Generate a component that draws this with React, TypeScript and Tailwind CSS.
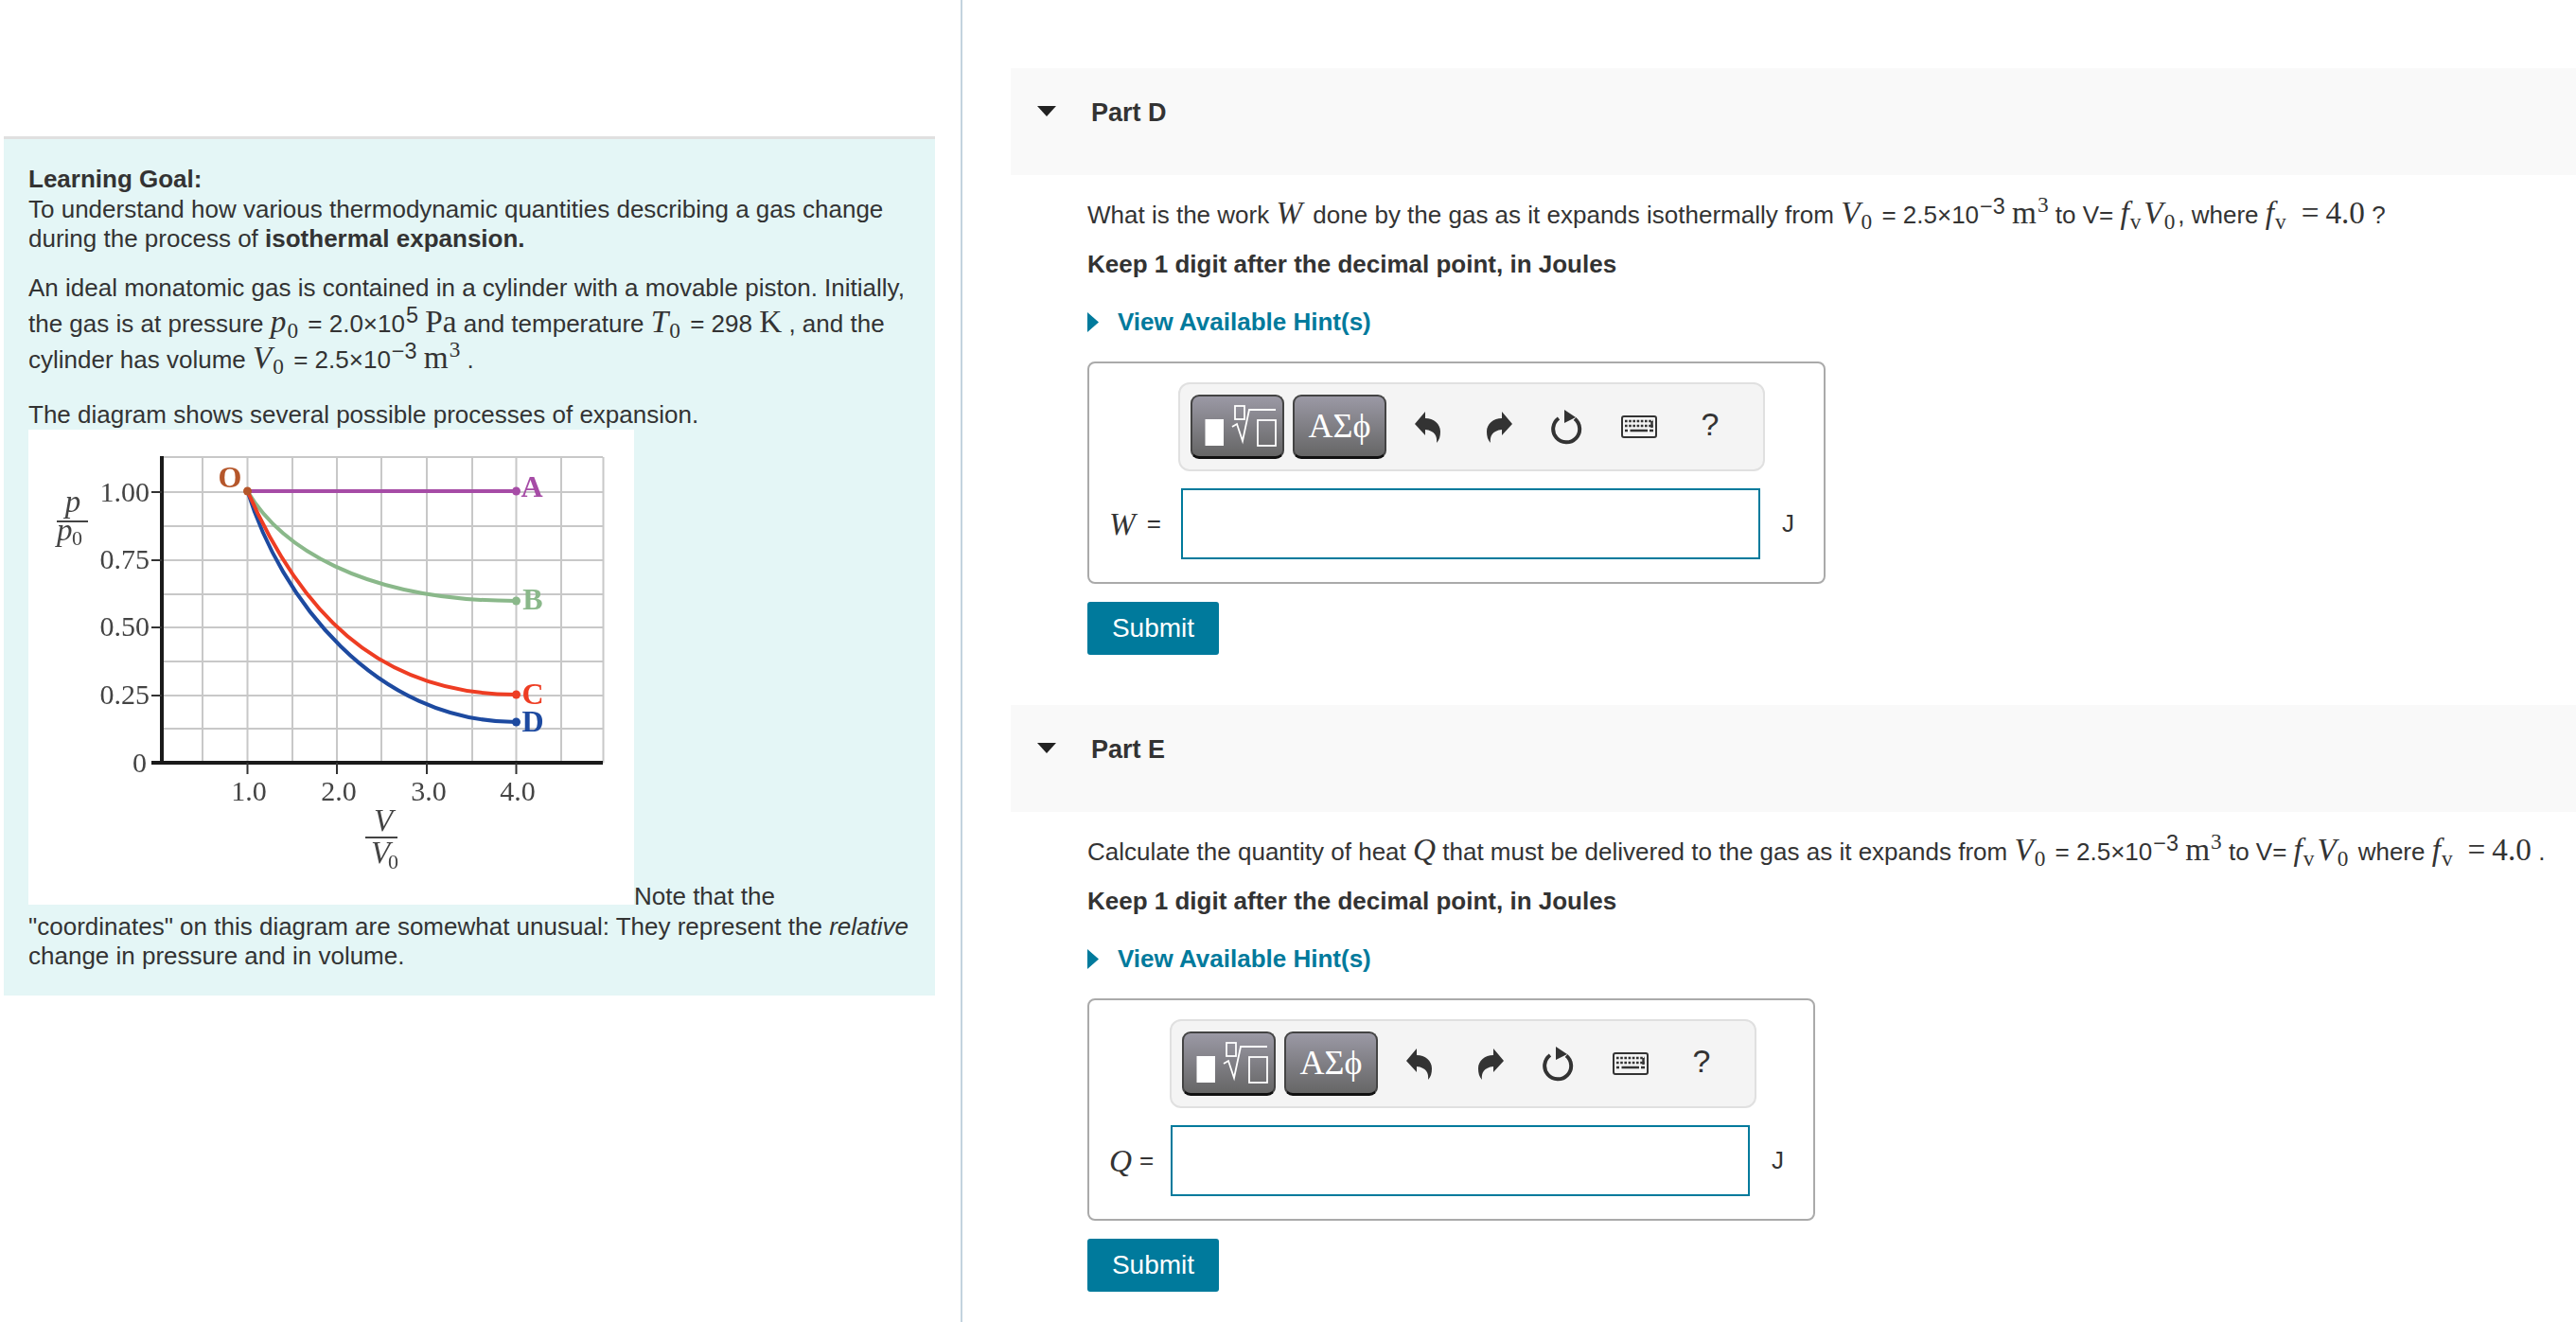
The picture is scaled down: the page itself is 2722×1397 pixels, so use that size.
import React from "react";

const serif = "font-['Liberation_Serif',serif]";

function M({ children, italic = true }: { children: React.ReactNode; italic?: boolean }) {
  return <span className={`${serif} ${italic ? "italic" : ""} text-[1.28em] leading-none`}>{children}</span>;
}
function Sub({ children }: { children: React.ReactNode }) {
  return <span className={`${serif} not-italic text-[0.7em] relative top-[0.26em] leading-none ml-[1px] mr-[3px]`}>{children}</span>;
}
function Sup({ children }: { children: React.ReactNode }) {
  return <span className="text-[0.9em] relative -top-[0.42em] leading-none ml-[1px]">{children}</span>;
}
function MSup({ children }: { children: React.ReactNode }) {
  return <span className="text-[0.7em] relative -top-[0.5em] leading-none ml-[1px]">{children}</span>;
}
const V0 = () => (<M>V<Sub>0</Sub></M>);
const Fv = () => (<M>f<Sub>v</Sub></M>);
const Vol = () => (<>{" = 2.5×10"}<Sup>−3</Sup>{" "}<M italic={false}>m<MSup>3</MSup></M></>);
const Four = () => (<M italic={false}><span className="ml-[13px] mr-[7px]">=</span>4.0</M>);

function Graph() {
  const vx = [214, 261.5, 309, 356, 403, 451, 499, 545.5, 593, 637.5];
  const hy = [482, 519, 555, 591, 627, 662, 698, 734, 769];
  return (
    <svg viewBox="30 453 640 502" width="640" height="502" className="inline bg-white align-baseline">
      <g className="blur-[0.6px]">
        {vx.map((x) => <line key={x} x1={x} x2={x} y1="482" y2="805" stroke="#c8c8c8" strokeWidth="2" />)}
        {hy.map((y) => <line key={y} x1="171" x2="637" y1={y} y2={y} stroke="#c8c8c8" strokeWidth="2" />)}
        <path d="M171 481V805M160 805H637" stroke="#1a1a1a" strokeWidth="4" fill="none" />
        {[519, 591, 662, 734].map((y) => <line key={y} x1="160" x2="171" y1={y} y2={y} stroke="#333" strokeWidth="2" />)}
        {[261.5, 356, 451, 545.5].map((x) => <line key={x} x1={x} x2={x} y1="805" y2="817" stroke="#333" strokeWidth="2" />)}
        <g fontFamily="'Liberation Serif',serif" fontSize="30" fill="#444">
          {[["1.00", 158, 529], ["0.75", 158, 600], ["0.50", 158, 671], ["0.25", 158, 743], ["0", 155, 815]].map(([t, x, y]) => (
            <text key={t as string} x={x as number} y={y as number} textAnchor="end">{t}</text>
          ))}
          {[["1.0", 263], ["2.0", 358], ["3.0", 453], ["4.0", 547]].map(([t, x]) => (
            <text key={t as string} x={x as number} y="845" textAnchor="middle">{t}</text>
          ))}
          <text x="77" y="540" textAnchor="middle" fontStyle="italic" fontSize="33">p</text>
          <text x="60" y="570" fontStyle="italic" fontSize="33">p</text>
          <text x="76" y="575" fontSize="22">0</text>
          <text x="405" y="877" textAnchor="middle" fontStyle="italic" fontSize="33">V</text>
          <text x="392" y="911" fontStyle="italic" fontSize="33">V</text>
          <text x="410" y="917" fontSize="22">0</text>
        </g>
        <path d="M60 550H93M386 884H420" stroke="#444" strokeWidth="1.8" />
        <path d="M261.5 518 C 295 575 380 634 545.5 634" stroke="#8ab88a" strokeWidth="4" fill="none" />
        <path d="M261.5 518 C 296 630 395 762 545.5 762" stroke="#1d4aa0" strokeWidth="4" fill="none" />
        <path d="M261.5 518 C 315 640 395 733 545.5 733" stroke="#ee3d23" strokeWidth="4" fill="none" />
        <path d="M261.5 518H545.5" stroke="#a64ca6" strokeWidth="4" />
        <circle cx="545.5" cy="518" r="4.5" fill="#a64ca6" />
        <circle cx="545.5" cy="634" r="4.5" fill="#8ab88a" />
        <circle cx="545.5" cy="733" r="4.5" fill="#ee3d23" />
        <circle cx="545.5" cy="762" r="4.5" fill="#1d4aa0" />
        <circle cx="261.5" cy="518" r="4.5" fill="#b5562a" />
        <g fontFamily="'Liberation Serif',serif" fontWeight="700" fontSize="32">
          <text x="243" y="514" textAnchor="middle" fill="#b5562a">O</text>
          <text x="562" y="524" textAnchor="middle" fill="#a64ca6">A</text>
          <text x="563" y="643" textAnchor="middle" fill="#8ab88a">B</text>
          <text x="563" y="743" textAnchor="middle" fill="#ee3d23">C</text>
          <text x="563" y="772" textAnchor="middle" fill="#1d4aa0">D</text>
        </g>
      </g>
    </svg>
  );
}

const Undo = ({ flip = false }: { flip?: boolean }) => (
  <svg width="27" height="33" viewBox="0 0 27 33" fill="#333">
    <path
      transform={flip ? "translate(27 0) scale(-1 1)" : undefined}
      d="M0 13 L11 0 V7 C20 7 27 13 27 21 C27 26 26 30 23 33 C24 26 21 20 11 19 V25 Z"
    />
  </svg>
);
const Reset = () => (
  <svg width="33" height="37" viewBox="0 0 33 37" fill="none">
    <path d="M8 9 A14 14 0 1 0 25 9.500" stroke="#333" strokeWidth="4" />
    <path d="M14 0 L26 8 L14 14 Z" fill="#333" />
  </svg>
);
const Keyboard = () => (
  <svg width="38" height="24" viewBox="0 0 38 24" fill="none">
    <rect x="1" y="1" width="36" height="22" rx="2" fill="#f4f4f4" stroke="#333" strokeWidth="2" />
    <path d="M4 6H34M4 11H34" stroke="#333" strokeWidth="2.4" strokeDasharray="2.6 1.6" />
    <path d="M4 16H7M9.500 16H28M30 16H34M32.500 6V13" stroke="#333" strokeWidth="2.4" />
  </svg>
);

const grad = "w-[99px] h-[68px] rounded-[9px] border-2 border-[#444] border-b-[3px] border-b-[#111] bg-gradient-to-b from-[#9b99a5] to-[#666666] flex items-center justify-center";

function Toolbar({ ml }: { ml: number }) {
  return (
    <div style={{ marginLeft: ml }} className="w-[620px] h-[94px] rounded-[12px] border-2 border-[#e0e0e0] bg-[#f4f4f4] flex items-center pl-[11px]">
      <div className={grad}>
        <svg width="95" height="64" viewBox="2 2 95 64" fill="none" stroke="#fff" strokeWidth="1.8">
          <rect x="15.500" y="26" width="19.500" height="28" fill="#fff" stroke="none" />
          <rect x="47" y="12" width="10" height="14" />
          <path d="M44 34 L49 31 L55 49 L62 16 H90" />
          <rect x="71" y="27" width="19" height="27" />
        </svg>
      </div>
      <div className={`${grad} ml-[9px] text-white ${serif} text-[36px] leading-none pb-[2px]`}>ΑΣϕ</div>
      <div className="ml-[30px]"><Undo /></div>
      <div className="ml-[49px]"><Undo flip /></div>
      <div className="ml-[41px]"><Reset /></div>
      <div className="ml-[41px]"><Keyboard /></div>
      <div className="ml-[46px] w-[20px] text-center text-[34px] text-[#333] leading-none pb-[6px]">?</div>
    </div>
  );
}

function Part({ title, question, label, boxW, labelW, tbMl, inputW, eqMl, last }: {
  title: string; question: React.ReactNode; label: string; boxW: number; labelW: number; tbMl: number; inputW: number; eqMl: number; last?: boolean;
}) {
  return (
    <section className={last ? "" : "mb-[53px]"}>
      <div className="h-[113px] bg-[#f9f9f9] pl-[28px] pt-[30px] flex items-start">
        <svg width="20" height="11" viewBox="0 0 20 11" className="mt-[10px]"><path d="M0 0H20L10 11Z" fill="#222" /></svg>
        <h2 className="ml-[37px] text-[27px] leading-[34px] font-bold text-[#333]">{title}</h2>
      </div>
      <div className="pl-[81px]">
        <p className="mt-[23px] leading-[36px] whitespace-nowrap">{question}</p>
        <p className="mt-[18px] leading-[32px] font-bold">Keep 1 digit after the decimal point, in Joules</p>
        <div className="mt-[29px] leading-[32px] flex items-center font-bold text-[#007a9c]">
          <svg width="12" height="21" viewBox="0 0 12 21"><path d="M0 0L12 10.500L0 21Z" fill="#007a9c" /></svg>
          <span className="ml-[20px]">View Available Hint(s)</span>
        </div>
        <div style={{ width: boxW }} className="mt-[26px] h-[235px] rounded-[8px] border-2 border-[#aaaaaa] pt-[20px]">
          <Toolbar ml={tbMl} />
          <div className="mt-[18px] flex items-center pl-[21px]">
            <div style={{ width: labelW + 1 }} className="flex items-center">
              <M>{label}</M><span style={{ marginLeft: eqMl }}>=</span>
            </div>
            <div style={{ width: inputW }} className="h-[75px] border-2 border-[#007a9c] bg-white" />
            <span className="ml-[23px]">J</span>
          </div>
        </div>
        <button className="mt-[19px] block w-[139px] h-[56px] rounded-[3px] bg-[#007a9c] text-white text-[28px]">Submit</button>
      </div>
    </section>
  );
}

export default function App() {
  return (
    <div className="flex h-[1397px] overflow-hidden bg-white text-[#333] font-['Liberation_Sans',Arial,sans-serif] text-[26px]">
      <aside className="w-[1017px] shrink-0 border-r-2 border-[#c3d3de] pt-[144px] pl-[4px]">
        <div className="w-[984px] border-t-[3px] border-[#e0e0e0] bg-[#e4f6f6] pl-[26px] pr-[26px] pt-[27px] pb-[25px] leading-[31.5px]">
          <p><b>Learning Goal:</b><br />To understand how various thermodynamic quantities describing a gas change during the process of <b>isothermal expansion.</b></p>
          <p className="mt-[17px] leading-[37px]">
            An ideal monatomic gas is contained in a cylinder with a movable piston. Initially, the gas is at pressure <M>p<Sub>0</Sub></M> = 2.0×10<Sup>5</Sup> <M italic={false}>Pa</M> and temperature <M>T<Sub>0</Sub></M> = 298 <M italic={false}>K</M> , and the cylinder has volume <V0 /><Vol /> .
          </p>
          <p className="mt-[24px]">
            The diagram shows several possible processes of expansion. <Graph />Note that the "coordinates" on this diagram are somewhat unusual: They represent the <i>relative</i> change in pressure and in volume.
          </p>
        </div>
      </aside>
      <main className="flex-1 pl-[51px] pt-[72px]">
        <Part
          title="Part D"
          label="W"
          boxW={780}
          labelW={75}
          eqMl={12}
          tbMl={94}
          inputW={612}
          question={<>What is the work <M>W</M><span className="ml-[4px]"> done</span> by the gas as it expands isothermally from <V0 /><Vol /> to V= <Fv /><V0 />, where <Fv /><Four /> ?</>}
        />
        <Part
          last
          title="Part E"
          label="Q"
          boxW={769}
          labelW={64}
          eqMl={8}
          tbMl={85}
          inputW={612}
          question={<>Calculate the quantity of heat <M>Q</M> that must be delivered to the gas as it expands from <V0 /><Vol /> to V= <Fv /><V0 /> where <Fv /><Four /> .</>}
        />
      </main>
    </div>
  );
}
